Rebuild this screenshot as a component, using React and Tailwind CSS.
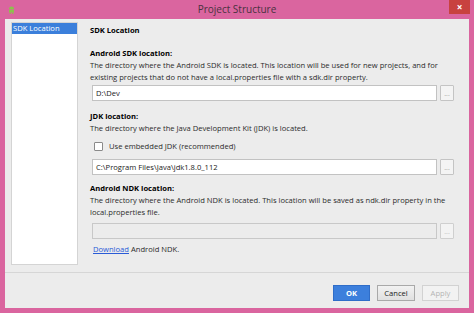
import React from 'react';

const Browse = ({ disabled }) => (
    <div
        className={`ml-[3px] w-[14px] h-[16px] border rounded-[1px] flex items-center justify-center text-[7px] leading-none ${
            disabled ? 'border-[#cfcfcf] bg-[#f3f3f3] text-[#c0c0c0]' : 'border-[#c4c4c4] bg-[#f4f4f4] text-[#a0a0a0]'
        }`}
    >
        ...
    </div>
);

const PathField = ({ value, disabled, className = '' }) => (
    <div className={`flex items-center ml-[2px] ${className}`}>
        <div
            className={`w-[345px] h-[16px] border flex items-center px-[3px] text-[#222] ${
                disabled ? 'bg-[#ececec] border-[#c8c8c8]' : 'bg-white border-[#c2c2c2]'
            }`}
        >
            {value}
        </div>
        <Browse disabled={disabled} />
    </div>
);

const Label = ({ children, className = '' }) => (
    <div className={`font-bold text-black ${className}`}>{children}</div>
);

const App = () => {
    return (
        <div
            className="w-[474px] h-[313px] bg-[#da659f] flex flex-col overflow-hidden text-[7.6px] leading-[12px] text-[#2b2b2b]"
            style={{ fontFamily: '"Open Sans", "Noto Sans", sans-serif' }}
        >
            {/* title bar */}
            <div className="h-[19px] flex items-start shrink-0">
                <div className="w-[40px] pl-[8px] pt-[6px]">
                    <svg width="7" height="8" viewBox="0 0 7 8">
                        <path d="M1 3 A2.5 2.5 0 0 1 6 3 Z" fill="#8bc34a" />
                        <rect x="1" y="3.6" width="5" height="3" rx="0.6" fill="#8bc34a" />
                        <rect x="1.6" y="6.4" width="1.2" height="1.6" fill="#8bc34a" />
                        <rect x="4.2" y="6.4" width="1.2" height="1.6" fill="#8bc34a" />
                    </svg>
                </div>
                <div className="flex-1 text-center pt-[3px] text-[10px] leading-[13px] text-[#4a3240]">
                    Project Structure
                </div>
                <div className="w-[40px] flex justify-end pr-[4px]">
                    <div className="w-[21px] h-[14px] bg-[#c8423f] text-white flex items-center justify-center text-[10px] font-bold leading-none">
                        ×
                    </div>
                </div>
            </div>

            {/* dialog body */}
            <div className="flex-1 mx-[5px] mb-[5px] bg-[#ececec] flex flex-col">
                <div className="flex h-[253px]">
                    <div className="ml-[6px] mt-[3px] w-[67px] h-[243px] bg-white border border-[#d4d4d4]">
                        <div className="h-[11px] bg-[#3b7fdb] text-white pl-[1px] leading-[11px]">
                            SDK Location
                        </div>
                    </div>

                    <div className="pl-[12px] pt-[5px] whitespace-nowrap">
                        <Label>SDK Location</Label>

                        <Label className="mt-[11px]">Android SDK location:</Label>
                        <div>
                            The directory where the Android SDK is located. This location will be used for new projects, and for
                            <br />
                            existing projects that do not have a local.properties file with a sdk.dir property.
                        </div>
                        <PathField className="mt-[2px]" value="D:\Dev" />

                        <Label className="mt-[9px]">JDK location:</Label>
                        <div>The directory where the Java Development Kit (JDK) is located.</div>
                        <div className="mt-[6px] h-[12px] flex items-center ml-[4px]">
                            <div className="w-[9px] h-[9px] bg-white border border-[#8a8a8a] rounded-[1px]" />
                            <span className="ml-[6px]">Use embedded JDK (recommended)</span>
                        </div>
                        <PathField className="mt-[7px]" value="C:\Program Files\Java\jdk1.8.0_112" />

                        <Label className="mt-[7px]">Android NDK location:</Label>
                        <div>
                            The directory where the Android NDK is located. This location will be saved as ndk.dir property in the
                            <br />
                            local.properties file.
                        </div>
                        <PathField className="mt-[5px]" value="" disabled />

                        <div className="mt-[4px] ml-[3px]">
                            <span className="text-[#2a5bd7] underline">Download</span> Android NDK.
                        </div>
                    </div>
                </div>

                <div className="border-t border-[#d6d6d6]" />

                <div className="flex-1 flex items-start justify-end pr-[10px] pt-[12px] gap-[7px]">
                    <div className="w-[37px] h-[16px] bg-[#3c7fdc] border border-[#2f6dc8] text-white font-bold flex items-center justify-center">
                        OK
                    </div>
                    <div className="w-[38px] h-[16px] bg-gradient-to-b from-[#f2f2f2] to-[#e0e0e0] border border-[#a9a9a9] text-[#222] flex items-center justify-center">
                        Cancel
                    </div>
                    <div className="w-[37px] h-[16px] bg-[#f2f2f2] border border-[#d2d2d2] text-[#b4b4b4] flex items-center justify-center">
                        Apply
                    </div>
                </div>
            </div>
        </div>
    );
};

export default App;
